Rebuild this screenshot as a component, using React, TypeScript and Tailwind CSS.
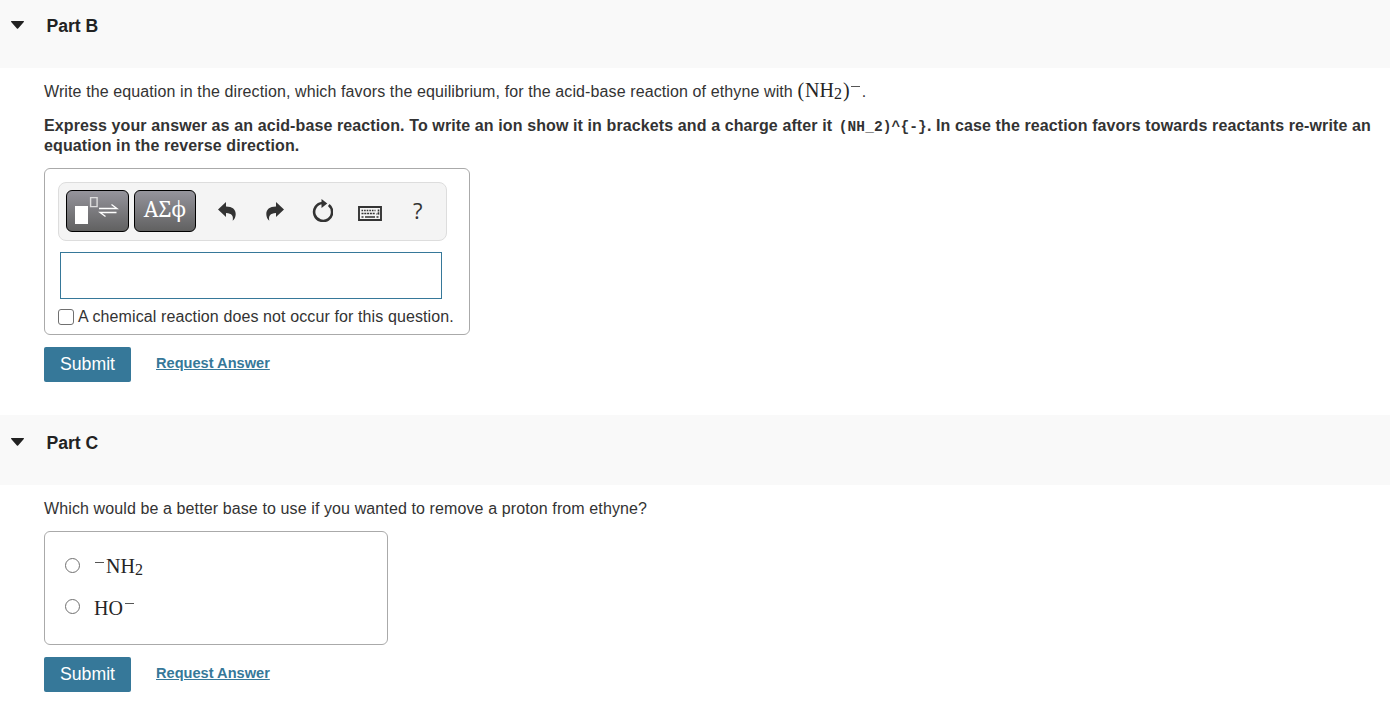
import type { ReactNode } from 'react'

function PartHeader({ title, className }: { title: string; className: string }) {
  return (
    <div className={`flex items-start bg-[#f9f9f9] pl-[11px] ${className}`}>
      <svg className="mt-[7px] h-2 w-[13px] shrink-0" viewBox="0 0 13 8" fill="#222">
        <path d="M0.6 0h11.8c.6 0 .8.7.4 1.100L7.100 7.500a.9.9 0 0 1-1.200 0L.2 1.100C-.2.7 0 0 .6 0z" />
      </svg>
      <h2 className="ml-[22.500px] text-[17.600px] leading-6 font-bold tracking-normal text-[#222]">{title}</h2>
    </div>
  )
}

function Formula({ children }: { children: ReactNode }) {
  return (
    <span className="inline-flex h-5 items-center font-['Liberation_Serif',serif] text-[20px] leading-5 tracking-normal text-[#252525]">
      {children}
    </span>
  )
}

function Sub({ children }: { children: ReactNode }) {
  return <span className="mt-[7px] text-[16px] leading-none">{children}</span>
}

function Minus() {
  return <span className="mb-[8px] ml-px inline-block h-px w-[9px] bg-[#555]" />
}

function Actions() {
  return (
    <div className="mt-3 flex items-start tracking-normal">
      <button className="h-[35px] w-[87px] rounded-xs bg-[#367899] text-[17.700px] text-white">Submit</button>
      <a href="#" className="mt-1.5 ml-[25px] text-[14.600px] leading-5 font-bold text-[#367899] underline">
        Request Answer
      </a>
    </div>
  )
}

function Toolbar() {
  return (
    <div className="flex h-[59px] w-[389px] items-start rounded-lg border border-[#ddd] bg-[#f4f4f4] pt-[7px] pl-[7px] tracking-normal text-[#333]">
      <button className="flex h-[42px] w-[63px] items-center justify-center rounded-[6px] border border-black bg-linear-to-b from-[#95949c] to-[#616161]">
        <svg className="mr-px mb-[3px]" width="44" height="30" viewBox="0 0 44 30" fill="none" stroke="#fff">
          <path d="M0 11h13v18H0z" fill="#fff" stroke="none" />
          <path d="M15.600 2.600h6.500v9h-6.500z" stroke="#ddd" strokeWidth="1.400" />
          <path d="M24 13.500h18l-5.500-4M41.500 17.500H25l5.500 4" strokeWidth="1.300" />
        </svg>
      </button>
      <button className="ml-[5px] h-[42px] w-[62px] rounded-[6px] border border-black bg-linear-to-b from-[#95949c] to-[#616161] pb-1 font-['Noto_Serif','Liberation_Serif',serif] text-[21px] leading-none text-white">
        ΑΣϕ
      </button>
      <button className="mt-3 ml-[22px]">
        <svg width="18" height="19" viewBox="0 0 18 19" fill="#333">
          <path d="M0 7.500 8 0v4.500c6.500 0 9.700 3 9.700 7.500 0 3-1.200 5.300-3 6.800.9-4.800-.7-7.600-6.700-7.800v4z" />
        </svg>
      </button>
      <button className="mt-3 ml-[30px]">
        <svg width="18" height="19" viewBox="0 0 18 19" fill="#333">
          <path d="M18 7.500 10 0v4.500C3.500 4.500.3 7.500.3 12c0 3 1.200 5.300 3 6.800-.9-4.800.7-7.600 6.700-7.800v4z" />
        </svg>
      </button>
      <button className="mt-[9px] ml-[28px]">
        <svg width="21" height="23" viewBox="0 0 21 23" fill="none">
          <path d="M16.800 6A9 9 0 1 1 10.500 4" stroke="#333" strokeWidth="2.600" />
          <path d="M9.500 0v9l5.800-4.500z" fill="#333" />
        </svg>
      </button>
      <button className="mt-[16px] ml-[25px]">
        <svg width="24" height="15" viewBox="0 0 24 15" fill="none" stroke="#333">
          <path d="M1 1h22v13H1z" strokeWidth="1.900" />
          <path d="M3.500 4.500h14" strokeWidth="1.700" strokeDasharray="1.600 1" />
          <path d="M3.500 7.500h14M20.500 3.500v4.500h-2" strokeWidth="1.600" strokeDasharray="2 .8" />
          <path d="M3.500 11h2M7 11h10M18.500 11h2" strokeWidth="1.500" />
        </svg>
      </button>
      <button className="mt-[6px] ml-[31px] font-['Open_Sans',sans-serif] text-[22px] leading-7">?</button>
    </div>
  )
}

function Choice({ children }: { children: ReactNode }) {
  return (
    <label className="flex h-5 items-center">
      <span className="mr-[14px] mb-[2px] size-[15px] rounded-full border border-[#707070] bg-white" />
      <Formula>{children}</Formula>
    </label>
  )
}

export default function App() {
  return (
    <div className="h-[709px] overflow-hidden bg-white font-['Liberation_Sans',Arial,sans-serif] text-[16px] tracking-[0.11px] text-[#333]">
      <PartHeader title="Part B" className="h-[68px] pt-[14px]" />

      <section className="h-[347px] pt-3 pl-11">
        <p className="flex h-5 items-center leading-5 whitespace-pre">
          <span className="pt-1">Write the equation in the direction, which favors the equilibrium, for the acid-base reaction of ethyne with </span>
          <Formula>
            <span className="mr-px">(</span>NH<Sub>2</Sub>
            <span className="ml-px">)</span>
            <Minus />
          </Formula>
          <span className="pt-1 pl-[2px]">.</span>
        </p>
        <p className="mt-4 leading-5 font-bold whitespace-nowrap">
          Express your answer as an acid-base reaction. To write an ion show it in brackets and a charge after it{' '}
          <code className="ml-[2px] font-['Liberation_Mono',monospace] text-[14.500px] leading-none">{'(NH_2)^{-}'}</code>. In case the reaction favors towards reactants re-write an
          <br />
          equation in the reverse direction.
        </p>

        <div className="mt-3 h-[167px] w-[426px] rounded-[6px] border border-[#aaa] pt-[13px] pl-[13px]">
          <Toolbar />
          <div className="mt-[11px] ml-[2px] h-[47px] w-[382px] border border-[#367899] bg-white" />
          <label className="mt-2 flex items-center leading-5 whitespace-nowrap">
            <span className="mr-1 mb-px size-4 rounded-[3px] border border-[#707070] bg-white" />
            A chemical reaction does not occur for this question.
          </label>
        </div>
        <Actions />
      </section>

      <PartHeader title="Part C" className="h-[70px] pt-[16px]" />

      <section className="pt-[14px] pl-11">
        <p className="leading-5">Which would be a better base to use if you wanted to remove a proton from ethyne?</p>
        <div className="mt-3 flex h-[114px] w-[344px] flex-col gap-[21px] rounded-[6px] border border-[#aaa] pt-[24px] pl-5">
          <Choice>
            <Minus />
            <span className="ml-[2px]">NH</span>
            <Sub>2</Sub>
          </Choice>
          <Choice>
            <span className="mt-[2px] mr-px">HO</span>
            <Minus />
          </Choice>
        </div>
        <Actions />
      </section>
    </div>
  )
}
